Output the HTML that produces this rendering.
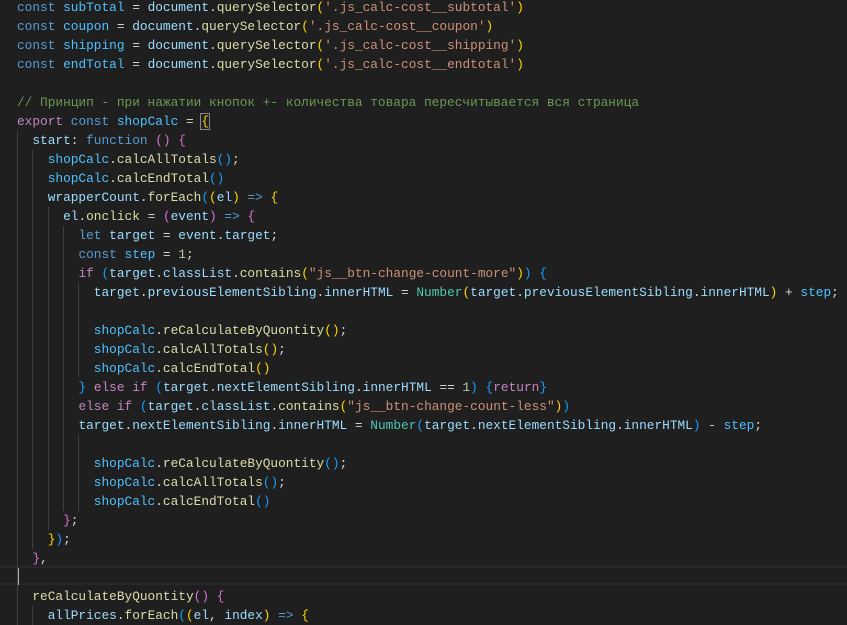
<!DOCTYPE html>
<html><head><meta charset="utf-8"><style>
html,body{margin:0;padding:0;background:#1f1f1f;width:847px;height:615px;overflow:hidden}
pre{position:absolute;left:17px;top:-2.5px;margin:0;font-family:"Liberation Mono",monospace;font-size:12.8px;line-height:19px;color:#d4d4d4;white-space:pre}
.l{height:19px;position:relative}
.g{display:inline-block;width:15.36px;height:19px;vertical-align:top;box-shadow:inset 1px 0 #404040}
.k{color:#569cd6}.c{color:#4fc1ff}.v{color:#9cdcfe}.f{color:#dcdcaa}.s{color:#ce9178}.p{color:#c586c0}.t{color:#4ec9b0}.n{color:#b5cea8}.cm{color:#6a9955}
.y{color:#ffd700}.o{color:#da70d6}.b{color:#179fff}
.box{outline:1px solid #888}
.cur{position:absolute;left:0;top:566px;width:847px;height:19px;box-sizing:border-box;border-top:2px solid #282828;border-bottom:2px solid #282828}
.caret{position:absolute;left:17px;top:568px;width:2px;height:17px;background:#aeafad}
</style></head><body>
<div class="cur"></div><div class="caret"></div>
<pre><div class="l"><span class="k">const</span> <span class="c">subTotal</span> = <span class="v">document</span>.<span class="f">querySelector</span><span class="y">(</span><span class="s">'.js_calc-cost__subtotal'</span><span class="y">)</span></div><div class="l"><span class="k">const</span> <span class="c">coupon</span> = <span class="v">document</span>.<span class="f">querySelector</span><span class="y">(</span><span class="s">'.js_calc-cost__coupon'</span><span class="y">)</span></div><div class="l"><span class="k">const</span> <span class="c">shipping</span> = <span class="v">document</span>.<span class="f">querySelector</span><span class="y">(</span><span class="s">'.js_calc-cost__shipping'</span><span class="y">)</span></div><div class="l"><span class="k">const</span> <span class="c">endTotal</span> = <span class="v">document</span>.<span class="f">querySelector</span><span class="y">(</span><span class="s">'.js_calc-cost__endtotal'</span><span class="y">)</span></div><div class="l"> </div><div class="l"><span class="cm">// Принцип - при нажатии кнопок +- количества товара пересчитывается вся страница</span></div><div class="l"><span class="p">export</span> <span class="k">const</span> <span class="c">shopCalc</span> = <span class="y box">{</span></div><div class="l"><span class="g"></span><span class="v">start</span>: <span class="k">function</span> <span class="o">()</span> <span class="o">{</span></div><div class="l"><span class="g"></span><span class="g"></span><span class="c">shopCalc</span>.<span class="f">calcAllTotals</span><span class="b">()</span>;</div><div class="l"><span class="g"></span><span class="g"></span><span class="c">shopCalc</span>.<span class="f">calcEndTotal</span><span class="b">()</span></div><div class="l"><span class="g"></span><span class="g"></span><span class="v">wrapperCount</span>.<span class="f">forEach</span><span class="b">(</span><span class="y">(</span><span class="v">el</span><span class="y">)</span> <span class="k">=&gt;</span> <span class="y">{</span></div><div class="l"><span class="g"></span><span class="g"></span><span class="g"></span><span class="v">el</span>.<span class="f">onclick</span> = <span class="o">(</span><span class="v">event</span><span class="o">)</span> <span class="k">=&gt;</span> <span class="o">{</span></div><div class="l"><span class="g"></span><span class="g"></span><span class="g"></span><span class="g"></span><span class="k">let</span> <span class="v">target</span> = <span class="v">event</span>.<span class="v">target</span>;</div><div class="l"><span class="g"></span><span class="g"></span><span class="g"></span><span class="g"></span><span class="k">const</span> <span class="c">step</span> = <span class="n">1</span>;</div><div class="l"><span class="g"></span><span class="g"></span><span class="g"></span><span class="g"></span><span class="p">if</span> <span class="b">(</span><span class="v">target</span>.<span class="v">classList</span>.<span class="f">contains</span><span class="y">(</span><span class="s">"js__btn-change-count-more"</span><span class="y">)</span><span class="b">)</span> <span class="b">{</span></div><div class="l"><span class="g"></span><span class="g"></span><span class="g"></span><span class="g"></span><span class="g" style="width:15.36px"></span><span class="v">target</span>.<span class="v">previousElementSibling</span>.<span class="v">innerHTML</span> = <span class="t">Number</span><span class="y">(</span><span class="v">target</span>.<span class="v">previousElementSibling</span>.<span class="v">innerHTML</span><span class="y">)</span> + <span class="c">step</span>;</div><div class="l"><span class="g"></span><span class="g"></span><span class="g"></span><span class="g"></span><span class="g"></span></div><div class="l"><span class="g"></span><span class="g"></span><span class="g"></span><span class="g"></span><span class="g"></span><span class="c">shopCalc</span>.<span class="f">reCalculateByQuontity</span><span class="y">()</span>;</div><div class="l"><span class="g"></span><span class="g"></span><span class="g"></span><span class="g"></span><span class="g"></span><span class="c">shopCalc</span>.<span class="f">calcAllTotals</span><span class="y">()</span>;</div><div class="l"><span class="g"></span><span class="g"></span><span class="g"></span><span class="g"></span><span class="g"></span><span class="c">shopCalc</span>.<span class="f">calcEndTotal</span><span class="y">()</span></div><div class="l"><span class="g"></span><span class="g"></span><span class="g"></span><span class="g"></span><span class="b">}</span> <span class="p">else</span> <span class="p">if</span> <span class="b">(</span><span class="v">target</span>.<span class="v">nextElementSibling</span>.<span class="v">innerHTML</span> == <span class="n">1</span><span class="b">)</span> <span class="b">{</span><span class="p">return</span><span class="b">}</span></div><div class="l"><span class="g"></span><span class="g"></span><span class="g"></span><span class="g"></span><span class="p">else</span> <span class="p">if</span> <span class="b">(</span><span class="v">target</span>.<span class="v">classList</span>.<span class="f">contains</span><span class="y">(</span><span class="s">"js__btn-change-count-less"</span><span class="y">)</span><span class="b">)</span></div><div class="l"><span class="g"></span><span class="g"></span><span class="g"></span><span class="g"></span><span class="v">target</span>.<span class="v">nextElementSibling</span>.<span class="v">innerHTML</span> = <span class="t">Number</span><span class="b">(</span><span class="v">target</span>.<span class="v">nextElementSibling</span>.<span class="v">innerHTML</span><span class="b">)</span> - <span class="c">step</span>;</div><div class="l"><span class="g"></span><span class="g"></span><span class="g"></span><span class="g"></span><span class="g"></span></div><div class="l"><span class="g"></span><span class="g"></span><span class="g"></span><span class="g"></span><span class="g"></span><span class="c">shopCalc</span>.<span class="f">reCalculateByQuontity</span><span class="b">()</span>;</div><div class="l"><span class="g"></span><span class="g"></span><span class="g"></span><span class="g"></span><span class="g"></span><span class="c">shopCalc</span>.<span class="f">calcAllTotals</span><span class="b">()</span>;</div><div class="l"><span class="g"></span><span class="g"></span><span class="g"></span><span class="g"></span><span class="g"></span><span class="c">shopCalc</span>.<span class="f">calcEndTotal</span><span class="b">()</span></div><div class="l"><span class="g"></span><span class="g"></span><span class="g"></span><span class="o">}</span>;</div><div class="l"><span class="g"></span><span class="g"></span><span class="y">}</span><span class="b">)</span>;</div><div class="l"><span class="g"></span><span class="o">}</span>,</div><div class="l"><span class="g"></span></div><div class="l"><span class="g"></span><span class="f">reCalculateByQuontity</span><span class="o">()</span> <span class="o">{</span></div><div class="l"><span class="g"></span><span class="g"></span><span class="v">allPrices</span>.<span class="f">forEach</span><span class="b">(</span><span class="y">(</span><span class="v">el</span>, <span class="v">index</span><span class="y">)</span> <span class="k">=&gt;</span> <span class="y">{</span></div></pre>
</body></html>
